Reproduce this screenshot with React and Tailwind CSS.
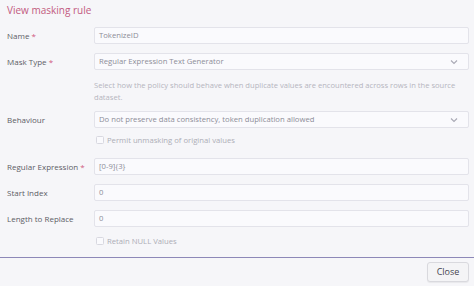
import React from "react";

const font = { fontFamily: '"Open Sans", "Noto Sans", sans-serif' };

function Label({ children, req }) {
  return (
    <div className="w-[87px] shrink-0 text-[8px] text-[#5d5d66] leading-[12px]">
      {children}
      {req && <span className="text-[#d0587e]"> *</span>}
    </div>
  );
}

function Input({ value, select }) {
  return (
    <div className="flex-1 h-[17px] border border-[#e3e3ea] bg-[#fafafd] rounded-[2px] flex items-center pl-[4px] pr-[8px] text-[7.7px] text-[#8d8d98]">
      <span className="flex-1">{value}</span>
      {select && (
        <svg width="8" height="6" viewBox="0 0 8 6" className="mr-[2px]">
          <path d="M1 1.5 L4 4.5 L7 1.5" fill="none" stroke="#a9a9b4" strokeWidth="1.1" />
        </svg>
      )}
    </div>
  );
}

function Check({ label, mt }) {
  return (
    <div className={`flex items-center h-[12px] pl-[89px] ${mt}`}>
      <div className="w-[8px] h-[8px] border border-[#d8d8e0] rounded-[1.5px] bg-[#fafafd]" />
      <span className="ml-[3px] text-[7.7px] text-[#adadb6] leading-[12px]">{label}</span>
    </div>
  );
}

export default function App() {
  return (
    <div style={font} className="w-[474px] h-[286px] bg-[#f6f6f9] flex flex-col overflow-hidden">
      <div className="px-[7px] pr-[5px]">
        <div className="pt-[4px] h-[21px] text-[10px] leading-[12px] text-[#c25a80]">View masking rule</div>
        <div className="flex items-center mt-[6px]">
          <Label req>Name</Label>
          <Input value="TokenizeID" />
        </div>
        <div className="flex items-center mt-[9px]">
          <Label req>Mask Type</Label>
          <Input value="Regular Expression Text Generator" select />
        </div>
        <div className="mt-[9px] pl-[87px] text-[7.6px] leading-[12px] text-[#b5b5be]">
          <div className="whitespace-nowrap">Select how the policy should behave when duplicate values are encountered across rows in the source</div>
          <div className="whitespace-nowrap">dataset.</div>
        </div>
        <div className="flex items-center mt-[8px]">
          <Label>Behaviour</Label>
          <Input value="Do not preserve data consistency, token duplication allowed" select />
        </div>
        <Check label="Permit unmasking of original values" mt="mt-[6px]" />
        <div className="flex items-center mt-[12px]">
          <Label req>Regular Expression</Label>
          <Input value="[0-9]{3}" />
        </div>
        <div className="flex items-center mt-[9px]">
          <Label>Start Index</Label>
          <Input value="0" />
        </div>
        <div className="flex items-center mt-[9px]">
          <Label>Length to Replace</Label>
          <Input value="0" />
        </div>
        <Check label="Retain NULL Values" mt="mt-[8px]" />
      </div>
      <div className="mt-[10px] border-t border-[#8d88b8] flex justify-end pt-[4px] pr-[5px]">
        <button className="h-[20px] w-[42px] border border-[#d9d9de] bg-[#f4f4f6] rounded-[3px] text-[9px] text-[#444450] shadow-[0_1px_1px_rgba(0,0,0,0.06)]">
          Close
        </button>
      </div>
    </div>
  );
}
